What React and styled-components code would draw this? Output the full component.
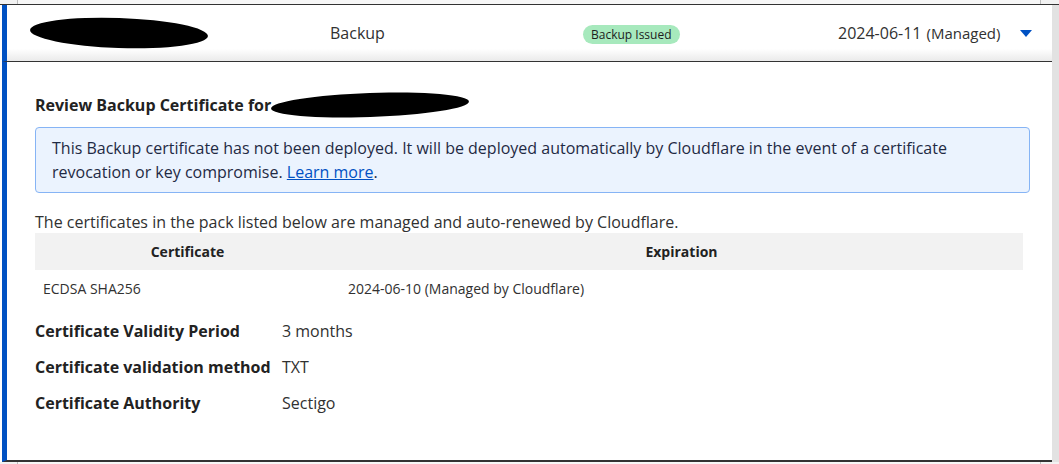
import React from 'react'
import styled, { createGlobalStyle } from 'styled-components'

const GlobalStyle = createGlobalStyle`
  html, body {
    margin: 0;
    padding: 0;
    background: #e6e6e6;
  }
  body {
    font-family: "Open Sans", "Noto Sans", sans-serif;
    color: #313131;
  }
`

const Page = styled.div`
  width: 1059px;
  height: 464px;
  display: flex;
  flex-direction: column;
  overflow: hidden;
  background: #e6e6e6;
`

const EdgeRow = styled.div`
  height: ${p => p.h}px;
  display: flex;
  background: #f2f2f2;
  .cell {
    margin-left: 17px;
    width: 1022px;
    border-left: 1px solid #bdbdbd;
    border-right: 1px solid #bdbdbd;
    background: #f7f7f7;
  }
`

const Main = styled.div`
  display: flex;
  flex: 1;
  border-top: 1px solid #333;
`

const Panel = styled.div`
  width: 1052px;
  display: flex;
  flex-direction: column;
  background: #fff;
`

const Gutter = styled.div`
  flex: 1;
  background: #e2e2e2;
`

const RowHeader = styled.div`
  height: 56px;
  display: flex;
  align-items: center;
  border-left: 5px solid #0051c3;
  margin-left: 2px;
  background: linear-gradient(to bottom, #fff 0%, #fff 78%, #eaeaea 100%);
  border-bottom: 1px solid #333;
  font-size: 16px;
  color: #313131;
`

const Redacted = styled.div`
  width: ${p => p.w}px;
  height: ${p => p.h}px;
  background: #000;
  border-radius: 50%;
  transform: rotate(${p => p.r || 0}deg);
`

const NameCell = styled.div`
  width: 300px;
  padding-left: 23px;
  display: flex;
  align-items: center;
`

const TypeCell = styled.div`
  width: 253px;
`

const StatusCell = styled.div`
  width: 255px;
`

const Badge = styled.span`
  display: inline-block;
  background: #a7e9bd;
  color: #1d1d1d;
  font-size: 12px;
  line-height: 19px;
  padding: 0 8px;
  border-radius: 10px;
`

const DateCell = styled.div`
  flex: 1;
  display: flex;
  align-items: center;
  font-size: 16px;
  small {
    font-size: 15px;
    margin-left: 5px;
  }
`

const Caret = styled.span`
  margin-left: 20px;
  width: 0;
  height: 0;
  border-left: 6px solid transparent;
  border-right: 6px solid transparent;
  border-top: 7px solid #0051c3;
`

const Body = styled.div`
  flex: 1;
  border-left: 5px solid #0051c3;
  margin-left: 2px;
  border-bottom: 2px solid #333;
  padding: 30px 22px 0 28px;
`

const Heading = styled.h3`
  margin: 0 0 9px;
  font-size: 16px;
  font-weight: 700;
  color: #222;
  display: flex;
  align-items: center;
  height: 26px;
`

const Notice = styled.div`
  background: #ebf3fe;
  border: 1px solid #86b4f5;
  border-radius: 4px;
  padding: 8px 16px 8px;
  font-size: 16px;
  line-height: 24px;
  color: #1f2a44;
  a {
    color: #0051c3;
    text-decoration: underline;
  }
`

const Lead = styled.p`
  margin: 18px 0 0;
  font-size: 16px;
  line-height: 22px;
`

const Table = styled.table`
  width: 988px;
  border-collapse: collapse;
  font-size: 14px;
  th {
    background: #f2f2f2;
    height: 37px;
    padding: 0;
    font-weight: 700;
    text-align: center;
    color: #222;
  }
  th.first {
    width: 305px;
  }
  td {
    height: 36px;
    padding: 0 0 4px 8px;
  }
`

const Details = styled.dl`
  margin: 3px 0 0;
  display: grid;
  grid-template-columns: 247px 1fr;
  grid-auto-rows: 36px;
  align-items: center;
  font-size: 16px;
  dt {
    font-weight: 700;
    color: #222;
  }
  dd {
    margin: 0;
  }
`

export default function App() {
  return (
    <Page>
      <GlobalStyle />
      <EdgeRow h={4}><div className="cell" /></EdgeRow>
      <Main>
        <Panel>
          <RowHeader>
            <NameCell><Redacted w={178} h={30} r={2} /></NameCell>
            <TypeCell>Backup</TypeCell>
            <StatusCell><Badge>Backup Issued</Badge></StatusCell>
            <DateCell>
              2024-06-11 <small>(Managed)</small>
              <Caret />
            </DateCell>
          </RowHeader>
          <Body>
            <Heading>
              Review Backup Certificate for
              <Redacted w={198} h={24} r={-2} />
            </Heading>
            <Notice>
              This Backup certificate has not been deployed. It will be deployed automatically by Cloudflare in the event of a certificate
              revocation or key compromise. <a href="#">Learn more</a>.
            </Notice>
            <Lead>The certificates in the pack listed below are managed and auto-renewed by Cloudflare.</Lead>
            <Table>
              <thead>
                <tr>
                  <th className="first">Certificate</th>
                  <th>Expiration</th>
                </tr>
              </thead>
              <tbody>
                <tr>
                  <td>ECDSA SHA256</td>
                  <td>2024-06-10 (Managed by Cloudflare)</td>
                </tr>
              </tbody>
            </Table>
            <Details>
              <dt>Certificate Validity Period</dt>
              <dd>3 months</dd>
              <dt>Certificate validation method</dt>
              <dd>TXT</dd>
              <dt>Certificate Authority</dt>
              <dd>Sectigo</dd>
            </Details>
          </Body>
        </Panel>
        <Gutter />
      </Main>
      <EdgeRow h={2}><div className="cell" /></EdgeRow>
    </Page>
  )
}
